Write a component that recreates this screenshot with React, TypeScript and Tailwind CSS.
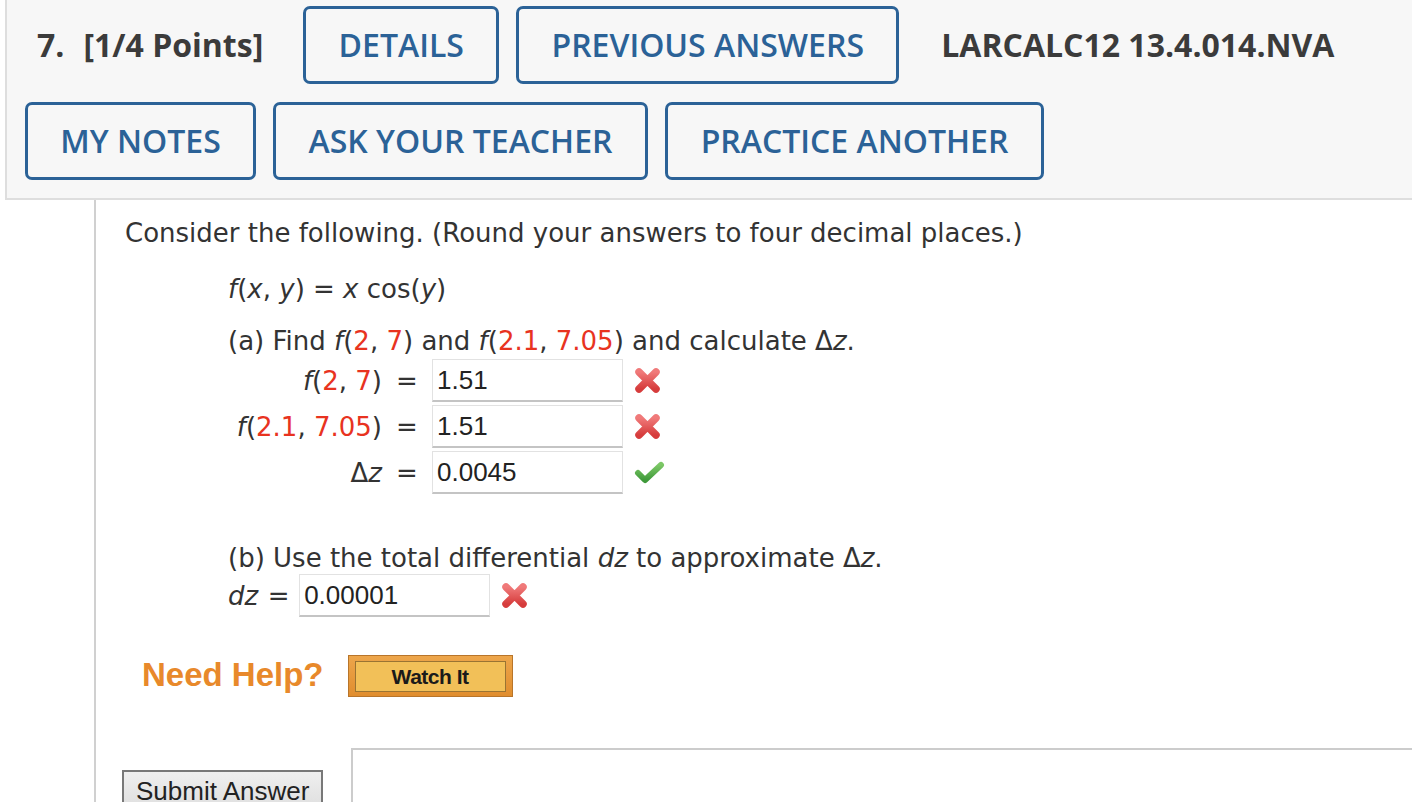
import React from 'react';

const HEAD_FONT = "font-['Open_Sans',sans-serif]";
const BODY_FONT = "font-['DejaVu_Sans',Verdana,sans-serif]";
const INPUT_FONT = "font-['Liberation_Sans',Arial,sans-serif]";

function OutlineButton({ label, width }: { label: string; width: string }) {
  return (
    <button
      type="button"
      className={`${width} h-[78px] shrink-0 rounded-[7px] border-[3px] border-[#2b6297] bg-[#f7f7f7] text-center text-[32px] font-semibold text-[#2b6297] ${HEAD_FONT}`}
    >
      {label}
    </button>
  );
}

function WrongMark() {
  return (
    <svg width="27" height="27" viewBox="0 0 27 27" className="shrink-0">
      <defs>
        <linearGradient id="xg" x1="0" y1="0" x2="0" y2="1">
          <stop offset="0" stopColor="#f07a7a" />
          <stop offset="1" stopColor="#d63c3c" />
        </linearGradient>
      </defs>
      <path d="M5 5 L22 22 M22 5 L5 22" stroke="url(#xg)" strokeWidth="7.5" strokeLinecap="round" fill="none" />
    </svg>
  );
}

function RightMark() {
  return (
    <svg width="31" height="25" viewBox="0 0 31 25" className="shrink-0">
      <defs>
        <linearGradient id="cg" x1="0" y1="0" x2="0" y2="1">
          <stop offset="0" stopColor="#7cc766" />
          <stop offset="1" stopColor="#3f9a3a" />
        </linearGradient>
      </defs>
      <path d="M4 13 L11 20 L27 5" stroke="url(#cg)" strokeWidth="6" strokeLinecap="round" strokeLinejoin="round" fill="none" />
    </svg>
  );
}

function AnswerBox({ value, width }: { value: string; width: string }) {
  return (
    <input
      readOnly
      value={value}
      className={`${width} h-[43px] shrink-0 border border-[#e2e2e2] border-b-2 border-b-[#c4c4c4] bg-white pl-[4px] text-[26px] text-[#222] outline-none ${INPUT_FONT}`}
    />
  );
}

const Red = ({ children }: { children: React.ReactNode }) => <span className="text-[#e8331f]">{children}</span>;
const I = ({ children }: { children: React.ReactNode }) => <i>{children}</i>;

type Row = { label: React.ReactNode; value: string; ok: boolean };

const rows: Row[] = [
  {
    label: (
      <>
        <I>f</I>(<Red>2</Red>, <Red>7</Red>)
      </>
    ),
    value: '1.51',
    ok: false,
  },
  {
    label: (
      <>
        <I>f</I>(<Red>2.1</Red>, <Red>7.05</Red>)
      </>
    ),
    value: '1.51',
    ok: false,
  },
  {
    label: (
      <>
        Δ<I>z</I>
      </>
    ),
    value: '0.0045',
    ok: true,
  },
];

export default function App() {
  return (
    <div className="min-h-screen w-full overflow-hidden bg-white">
      {/* question header */}
      <div className="ml-[5px] h-[200px] border-b-2 border-l-2 border-[#dedede] bg-[#f7f7f7]">
        <div className="flex items-center pl-[30px] pt-[6px]">
          <span className={`text-[32px] font-bold text-[#3b3b3b] ${HEAD_FONT}`}>7.</span>
          <span className={`ml-[19px] text-[32px] font-bold text-[#3b3b3b] ${HEAD_FONT}`}>[1/4 Points]</span>
          <div className="ml-[40px] flex gap-[17px]">
            <OutlineButton label="DETAILS" width="w-[196px]" />
            <OutlineButton label="PREVIOUS ANSWERS" width="w-[383px]" />
          </div>
          <span className={`ml-[42px] text-[32px] font-bold text-[#3b3b3b] ${HEAD_FONT}`}>LARCALC12 13.4.014.NVA</span>
        </div>
        <div className="mt-[18px] flex gap-[17px] pl-[18px]">
          <OutlineButton label="MY NOTES" width="w-[231px]" />
          <OutlineButton label="ASK YOUR TEACHER" width="w-[375px]" />
          <OutlineButton label="PRACTICE ANOTHER" width="w-[379px]" />
        </div>
      </div>

      {/* question body */}
      <div className={`ml-[94px] min-h-[620px] border-l-2 border-[#d0d0d0] pl-[29px] pt-[15px] text-[26px] leading-[36px] text-[#333] ${BODY_FONT}`}>
        <p>Consider the following. (Round your answers to four decimal places.)</p>

        <div className="ml-[103px]">
          <p className="mt-[20px]">
            <I>f</I>(<I>x</I>, <I>y</I>) = <I>x</I> cos(<I>y</I>)
          </p>
          <p className="mt-[16px]">
            (a) Find <I>f</I>(<Red>2</Red>, <Red>7</Red>) and <I>f</I>(<Red>2.1</Red>, <Red>7.05</Red>) and calculate Δ<I>z</I>.
          </p>
        </div>

        <div className="flex flex-col gap-[3px]">
          {rows.map((r, i) => (
            <div key={i} className="flex items-center">
              <div className="w-[257px] shrink-0 text-right">{r.label}</div>
              <div className="w-[50px] shrink-0 text-center">=</div>
              <AnswerBox value={r.value} width="w-[191px]" />
              <div className="ml-[11px] flex w-[32px] items-center">{r.ok ? <RightMark /> : <WrongMark />}</div>
            </div>
          ))}
        </div>

        <div className="ml-[103px]">
          <p className="mt-[46px]">
            (b) Use the total differential <I>dz</I> to approximate Δ<I>z</I>.
          </p>
          <div className="-mt-[2px] flex items-center">
            <span>
              <I>dz</I>
            </span>
            <span className="w-[41px] shrink-0 text-center">=</span>
            <AnswerBox value="0.00001" width="w-[191px]" />
            <div className="ml-[11px]">
              <WrongMark />
            </div>
          </div>
        </div>

        <div className="mt-[38px] flex items-center pl-[17px]">
          <span className="mb-[4px] font-['Liberation_Sans',Arial,sans-serif] text-[33px] font-bold leading-none text-[#e8892b]">Need Help?</span>
          <div className="ml-[24px] flex h-[42px] w-[165px] items-center justify-center border border-[#b8752a] bg-[linear-gradient(#eda64b,#e08d2e)]">
            <div className="flex h-[31px] w-[151px] items-center justify-center border border-[#9a7433] bg-[#f2c058]">
              <span className="font-['Liberation_Sans',Arial,sans-serif] text-[21px] font-bold leading-none tracking-[-0.5px] text-[#1a1a1a]">Watch It</span>
            </div>
          </div>
        </div>

        <div className="-ml-[3px] mt-[51px] flex items-start">
          <button
            type="button"
            className={`mt-[22px] h-[42px] shrink-0 border-2 border-[#787878] bg-[linear-gradient(#efefef,#dedede)] px-[12px] text-[26px] leading-none text-[#222] ${INPUT_FONT}`}
          >
            Submit Answer
          </button>
          <div className="ml-[28px] h-[120px] flex-1 border-l-2 border-t-2 border-[#cccccc]" />
        </div>
      </div>
    </div>
  );
}
